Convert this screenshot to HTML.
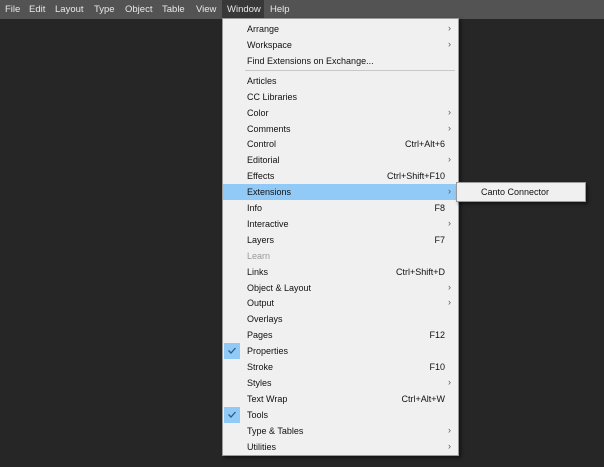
<!DOCTYPE html>
<html><head><style>
body{margin:0;width:604px;height:467px;background:#262626;position:relative;overflow:hidden;font-family:"Liberation Sans",sans-serif;font-size:9px;}
#bar{position:absolute;left:0;top:0;width:604px;height:19px;background:#535353;}
#bar span{position:absolute;top:4px;color:#e8e8e8;font-size:9.5px;}
#win{position:absolute;left:222px;top:0;width:42px;height:19px;background:#383838;}
#menu{position:absolute;left:222px;top:18px;width:237px;height:438px;background:#f0f0f0;border:1px solid #9a9a9a;box-sizing:border-box;box-shadow:2px 2px 3px rgba(0,0,0,.5);}
.r{position:absolute;left:0;width:235px;height:16px;color:#111;}
.r .t{position:absolute;left:24px;top:3px;}
.r .k{position:absolute;right:13px;top:3px;}
.r .a{position:absolute;right:7px;top:2px;font-size:9px;color:#555;}
.hl{background:#91c9f7;}
.dis{color:#9a9a9a;}
.ck{position:absolute;left:1px;top:0;width:16px;height:16px;background:#91c9f7;}
.ck svg{position:absolute;left:4px;top:4px;}
#sep{position:absolute;left:22px;right:3px;top:51px;height:1px;background:#c8c8c8;}
#sub{position:absolute;left:456px;top:182px;width:130px;height:20px;background:#f0f0f0;border:1px solid #9a9a9a;box-sizing:border-box;box-shadow:2px 2px 3px rgba(0,0,0,.5);}
#sub span{position:absolute;left:24px;top:4px;color:#111;}
</style></head><body>
<div id="bar"><div id="win"></div>
<span style="left:5px">File</span><span style="left:29px">Edit</span><span style="left:55px">Layout</span><span style="left:94px">Type</span><span style="left:125px">Object</span><span style="left:162px">Table</span><span style="left:196px">View</span><span style="left:227px">Window</span><span style="left:270px">Help</span></div>
<div id="menu">
<div class="r" style="top:2px"><span class="t">Arrange</span><span class="a">›</span></div>
<div class="r" style="top:18px"><span class="t">Workspace</span><span class="a">›</span></div>
<div class="r" style="top:34px"><span class="t">Find Extensions on Exchange...</span></div>
<div id="sep"></div>
<div class="r" style="top:54px"><span class="t">Articles</span></div>
<div class="r" style="top:70px"><span class="t">CC Libraries</span></div>
<div class="r" style="top:86px"><span class="t">Color</span><span class="a">›</span></div>
<div class="r" style="top:102px"><span class="t">Comments</span><span class="a">›</span></div>
<div class="r" style="top:117px"><span class="t">Control</span><span class="k">Ctrl+Alt+6</span></div>
<div class="r" style="top:133px"><span class="t">Editorial</span><span class="a">›</span></div>
<div class="r" style="top:149px"><span class="t">Effects</span><span class="k">Ctrl+Shift+F10</span></div>
<div class="r hl" style="top:165px"><span class="t">Extensions</span><span class="a">›</span></div>
<div class="r" style="top:181px"><span class="t">Info</span><span class="k">F8</span></div>
<div class="r" style="top:197px"><span class="t">Interactive</span><span class="a">›</span></div>
<div class="r" style="top:213px"><span class="t">Layers</span><span class="k">F7</span></div>
<div class="r dis" style="top:229px"><span class="t">Learn</span></div>
<div class="r" style="top:245px"><span class="t">Links</span><span class="k">Ctrl+Shift+D</span></div>
<div class="r" style="top:261px"><span class="t">Object &amp; Layout</span><span class="a">›</span></div>
<div class="r" style="top:276px"><span class="t">Output</span><span class="a">›</span></div>
<div class="r" style="top:292px"><span class="t">Overlays</span></div>
<div class="r" style="top:308px"><span class="t">Pages</span><span class="k">F12</span></div>
<div class="r" style="top:324px"><div class="ck"><svg width="8" height="7"><path d="M0.5 3.5 L3 6 L7.5 1" stroke="#2a5d8a" stroke-width="1.3" fill="none"/></svg></div><span class="t">Properties</span></div>
<div class="r" style="top:340px"><span class="t">Stroke</span><span class="k">F10</span></div>
<div class="r" style="top:356px"><span class="t">Styles</span><span class="a">›</span></div>
<div class="r" style="top:372px"><span class="t">Text Wrap</span><span class="k">Ctrl+Alt+W</span></div>
<div class="r" style="top:388px"><div class="ck"><svg width="8" height="7"><path d="M0.5 3.5 L3 6 L7.5 1" stroke="#2a5d8a" stroke-width="1.3" fill="none"/></svg></div><span class="t">Tools</span></div>
<div class="r" style="top:404px"><span class="t">Type &amp; Tables</span><span class="a">›</span></div>
<div class="r" style="top:420px"><span class="t">Utilities</span><span class="a">›</span></div>
</div>
<div id="sub"><span>Canto Connector</span></div>
</body></html>
